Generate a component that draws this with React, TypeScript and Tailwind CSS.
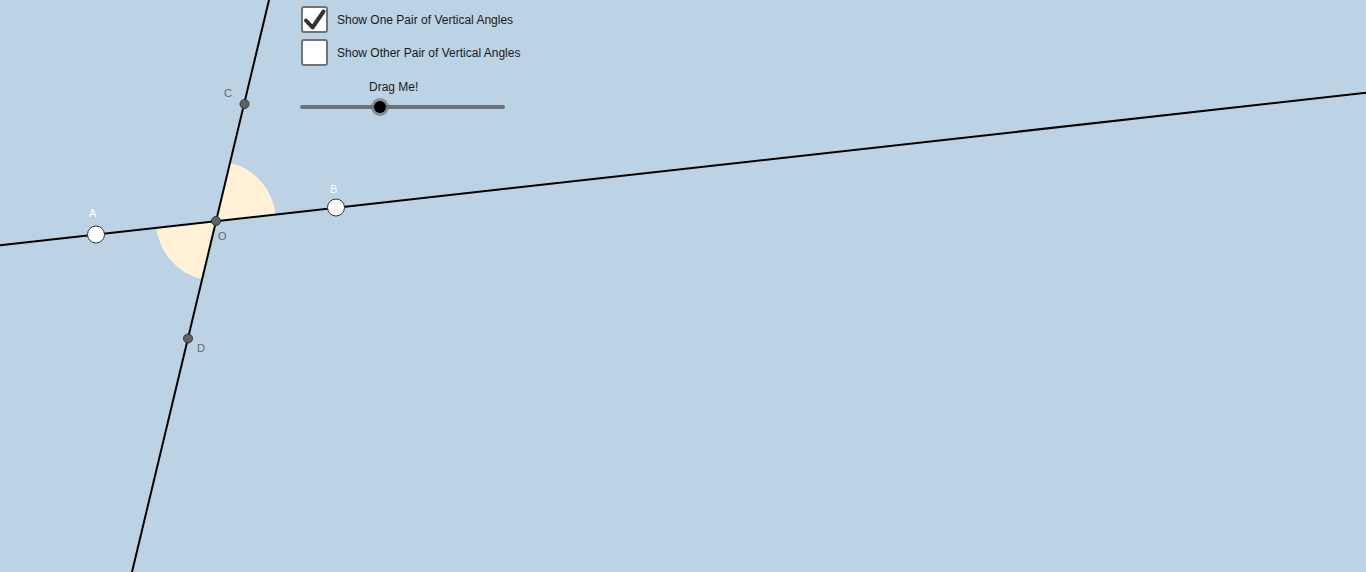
import React from "react";

const O = { x: 216, y: 221 };

function sector(cx: number, cy: number, r: number, a1: number, a2: number) {
  const rad = (d: number) => (d * Math.PI) / 180;
  const x1 = cx + r * Math.cos(rad(a1));
  const y1 = cy + r * Math.sin(rad(a1));
  const x2 = cx + r * Math.cos(rad(a2));
  const y2 = cy + r * Math.sin(rad(a2));
  return `M ${cx} ${cy} L ${x1} ${y1} A ${r} ${r} 0 0 1 ${x2} ${y2} Z`;
}

export default function App() {
  const aB = (Math.atan2(207 - 221, 336 - 216) * 180) / Math.PI;
  const aC = (Math.atan2(104 - 221, 244 - 216) * 180) / Math.PI;
  return (
    <div className="relative w-full h-[572px] overflow-hidden bg-[#bcd3e6] font-['Liberation_Sans',Arial,sans-serif]">
      <svg className="absolute inset-0" width="1366" height="572" viewBox="0 0 1366 572">
        <path d={sector(O.x, O.y, 60, aC, aB)} fill="#fff0d6" />
        <path d={sector(O.x, O.y, 60, aC + 180, aB + 180)} fill="#fff0d6" />
        <line x1="0" y1="245.3" x2="1366" y2="92.8" stroke="#000" strokeWidth="2" />
        <line x1="269" y1="0" x2="132" y2="572" stroke="#000" strokeWidth="2" />
        <circle cx="96" cy="234.5" r="8.5" fill="#fff" stroke="#333" strokeWidth="1" />
        <circle cx="336" cy="207.5" r="8.5" fill="#fff" stroke="#333" strokeWidth="1" />
        <circle cx="244.5" cy="104" r="4.5" fill="#5f6368" stroke="#333" strokeWidth="1" />
        <circle cx="188" cy="338.5" r="4.5" fill="#5f6368" stroke="#333" strokeWidth="1" />
        <circle cx={O.x} cy={O.y} r="4.5" fill="#5f6368" stroke="#333" strokeWidth="1" />
        <g fontFamily="Liberation Sans, Arial, sans-serif" fontSize="11">
          <text x="89" y="217" fill="#fff">A</text>
          <text x="330" y="193" fill="#fff">B</text>
          <text x="224" y="97" fill="#666">C</text>
          <text x="197" y="352" fill="#666">D</text>
          <text x="218" y="240" fill="#666">O</text>
        </g>
      </svg>

      <div className="absolute left-[301px] top-[6px] flex flex-col text-[#1a1a1a]">
        <label className="flex items-center gap-[9px] h-[27px]">
          <span className="w-[27px] h-[27px] rounded-[3px] border-2 border-[#6f7377] bg-white flex items-center justify-center">
            <svg width="27" height="27" viewBox="0 0 27 27" className="-m-[2px]">
              <path d="M5 14.5 L11.5 21.5 L22.5 5.5" fill="none" stroke="#333" strokeWidth="4" strokeLinecap="round" strokeLinejoin="round" />
            </svg>
          </span>
          <span className="text-[12px] leading-none">Show One Pair of Vertical Angles</span>
        </label>
        <label className="flex items-center gap-[9px] h-[27px] mt-[6px]">
          <span className="w-[27px] h-[27px] rounded-[3px] border-2 border-[#6f7377] bg-white" />
          <span className="text-[12px] leading-none">Show Other Pair of Vertical Angles</span>
        </label>
        <div className="mt-[15px] w-[205px] -ml-[1px] flex flex-col">
          <div className="text-[12px] leading-none ml-[69px]">Drag Me!</div>
          <div className="relative mt-[10px] h-[8px] flex items-center">
            <div className="w-full h-[4px] rounded-full bg-[#6e7276]" />
            <div className="absolute left-[71px] top-[-5px] w-[18px] h-[18px] rounded-full bg-[#6e7276]/70 flex items-center justify-center">
              <div className="w-[12px] h-[12px] rounded-full bg-black" />
            </div>
          </div>
        </div>
      </div>
    </div>
  );
}
